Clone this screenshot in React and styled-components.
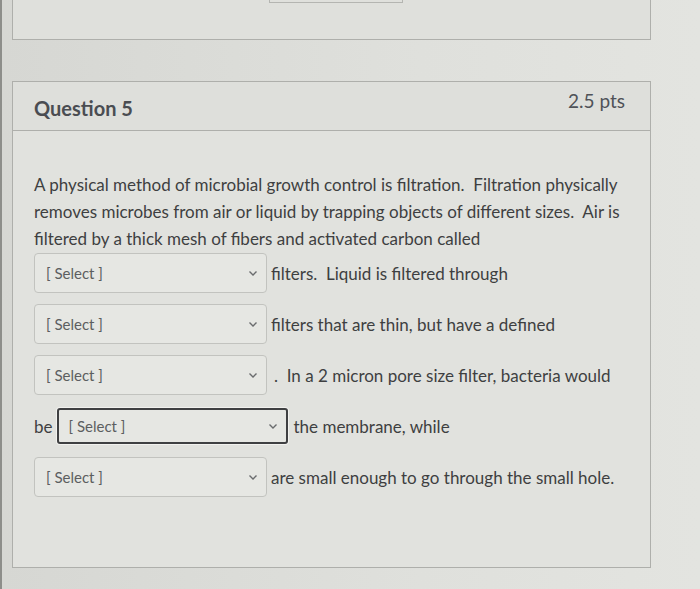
import React from 'react'
import styled, { createGlobalStyle } from 'styled-components'

const GlobalStyle = createGlobalStyle`
  html, body {
    margin: 0;
    padding: 0;
    background: #dadbd7;
    font-family: Lato, "Open Sans", sans-serif;
  }
`

const Page = styled.div`
  min-height: 589px;
  padding: 0 49px 0 10px;
  border-left: 2px solid #8d8e8a;
  background: linear-gradient(90deg, #d6d7d3 0%, #dfe0dc 60%, #e3e4e0 100%);
  box-sizing: border-box;
  overflow: hidden;
`

const TopCard = styled.div`
  height: 40px;
  margin-top: -2px;
  border: 1px solid #aeafab;
  background: #dfe0dc;
  padding-left: 256px;
`

const Stub = styled.div`
  width: 132px;
  height: 3px;
  border: 1px solid #b4b5b1;
  border-top: none;
`

const Card = styled.section`
  margin-top: 41px;
  border: 1px solid #aeafab;
  background: #e1e2de;
`

const Header = styled.header`
  height: 48px;
  display: flex;
  align-items: center;
  justify-content: space-between;
  padding: 0 25px 0 21px;
  border-bottom: 1px solid #aeafab;
  background: #dedfdb;
  color: #4a4d52;
`

const Title = styled.h2`
  margin: 4px 0 0;
  font-size: 20px;
  font-weight: 700;
`

const Points = styled.span`
  margin-bottom: 12px;
  font-size: 19px;
  font-weight: 400;
  color: #4f5258;
`

const Body = styled.div`
  padding: 40px 21px 70px;
  color: #3e3f41;
  font-size: 17px;
`

const Paragraph = styled.p`
  margin: 0;
  line-height: 27px;
`

const Rows = styled.div`
  display: flex;
  flex-direction: column;
  gap: 11px;
  margin-top: 1px;
`

const Row = styled.div`
  display: flex;
  align-items: center;
  height: 40px;
`

const Select = styled.div`
  width: ${p => (p.focused ? 209 : 212)}px;
  height: ${p => (p.focused ? 32 : 38)}px;
  display: flex;
  align-items: center;
  justify-content: space-between;
  padding: 0 8px 0 ${p => (p.focused ? 10 : 11)}px;
  border: ${p => (p.focused ? '2px solid #3f4042' : '1px solid #c2c3bf')};
  border-radius: ${p => (p.focused ? 3 : 4)}px;
  background: #e6e7e3;
  box-shadow: ${p => (p.focused ? '0 0 0 1px #f2f2ef' : 'none')};
  color: #5c5e60;
  font-size: 15px;
  box-sizing: content-box;
`

const Chevron = () => (
  <svg width="10" height="7" viewBox="0 0 10 7">
    <path d="M1.5 1.5 L5 5 L8.5 1.5" fill="none" stroke="#6a6c6e" strokeWidth="1.4" />
  </svg>
)

const After = styled.span`
  margin-left: ${p => p.gap || 4}px;
  white-space: nowrap;
`

const Before = styled.span`
  margin-right: 4px;
`

function Dropdown({ focused }) {
  return (
    <Select focused={focused}>
      <span>[ Select ]</span>
      <Chevron />
    </Select>
  )
}

export default function App() {
  return (
    <>
      <GlobalStyle />
      <Page>
        <TopCard>
          <Stub />
        </TopCard>
        <Card>
          <Header>
            <Title>Question 5</Title>
            <Points>2.5 pts</Points>
          </Header>
          <Body>
            <Paragraph>
              A physical method of microbial growth control is filtration.&nbsp; Filtration physically
              removes microbes from air or liquid by trapping objects of different sizes.&nbsp; Air is
              filtered by a thick mesh of fibers and activated carbon called
            </Paragraph>
            <Rows>
              <Row>
                <Dropdown />
                <After>filters.&nbsp; Liquid is filtered through</After>
              </Row>
              <Row>
                <Dropdown />
                <After>filters that are thin, but have a defined</After>
              </Row>
              <Row>
                <Dropdown />
                <After gap={7}>.&nbsp; In a 2 micron pore size filter, bacteria would</After>
              </Row>
              <Row>
                <Before>be</Before>
                <Dropdown focused />
                <After gap={6}>the membrane, while</After>
              </Row>
              <Row>
                <Dropdown />
                <After>are small enough to go through the small hole.</After>
              </Row>
            </Rows>
          </Body>
        </Card>
      </Page>
    </>
  )
}
